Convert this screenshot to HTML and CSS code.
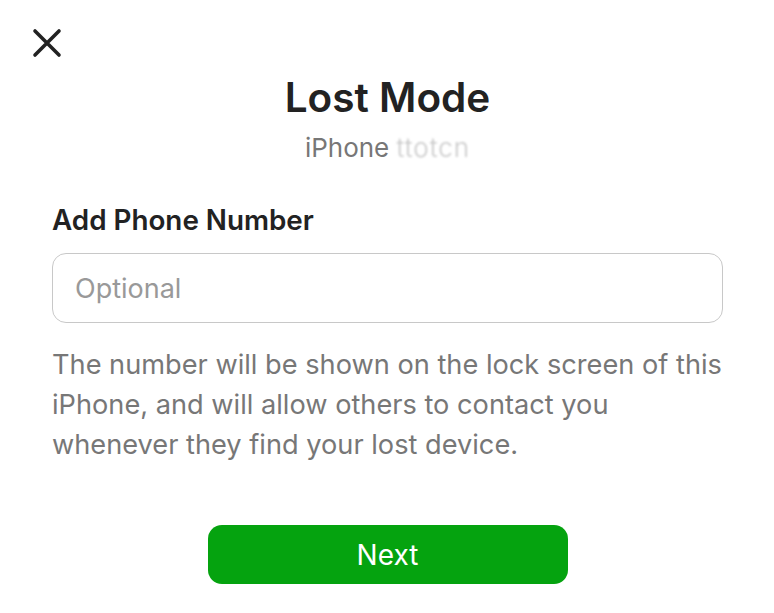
FILE: index.html
```html
<!DOCTYPE html>
<html lang="en">
<head>
  <meta charset="UTF-8">
  <title>Lost Mode</title>
  <link rel="stylesheet" href="styles.css">
</head>
<body>

<div class="sheet">
  <button class="close" aria-label="Close">
    <svg width="30" height="30" viewBox="0 0 30 30">
      <path d="M3 3 L27 27 M27 3 L3 27" stroke="#222" stroke-width="3.6" stroke-linecap="round" fill="none"/>
    </svg>
  </button>

  <div class="header">
    <h1>Lost Mode</h1>
    <p class="device">iPhone <span class="masked">ttotcn</span></p>
  </div>

  <div class="field">
    <label for="phone">Add Phone Number</label>
    <input type="text" id="phone" placeholder="Optional">
    <p class="hint">The number will be shown on the lock screen of this iPhone, and will allow others to contact you whenever they find your lost device.</p>
  </div>

  <div class="actions">
    <button class="next">Next</button>
  </div>
</div>

</body>
</html>
```

FILE: styles.css
```css
body {
  margin: 0;
  background: #fff;
  font-family: Inter, 'Noto Sans', sans-serif;
  color: #222;
}

.sheet {
  display: flex;
  flex-direction: column;
  padding: 28px 51px 0 52px;
}

.close {
  align-self: flex-start;
  margin-left: -20px;
  padding: 0;
  border: none;
  background: none;
  width: 30px;
  height: 30px;
  cursor: pointer;
}

.header {
  text-align: center;
  margin-top: 16px;
}

h1 {
  margin: 0;
  font-size: 40.5px;
  font-weight: 600;
  line-height: 48px;
  color: #222;
}

.device {
  margin: 10px 0 0;
  font-size: 26px;
  line-height: 32px;
  color: #777;
}

.masked {
  color: #c8c8c8;
  filter: blur(1px);
  font-weight: 300;
  letter-spacing: 1px;
}

.field {
  display: flex;
  flex-direction: column;
  margin-top: 40px;
}

label {
  font-size: 27.8px;
  font-weight: 600;
  line-height: 32px;
  color: #222;
}

input {
  margin-top: 17px;
  height: 70px;
  box-sizing: border-box;
  padding: 0 22px;
  font-family: inherit;
  font-size: 27px;
  border: 1.5px solid #c8c8c8;
  border-radius: 14px;
  outline: none;
  color: #222;
}

input::placeholder {
  color: #999;
}

.hint {
  margin: 22px 0 0;
  font-size: 27.2px;
  line-height: 40px;
  color: #777;
}

.actions {
  display: flex;
  justify-content: center;
  margin-top: 60px;
}

.next {
  width: 360px;
  height: 59px;
  border: none;
  border-radius: 14px;
  background: #05a30f;
  color: #fff;
  font-family: inherit;
  font-size: 28px;
  cursor: pointer;
}
```
